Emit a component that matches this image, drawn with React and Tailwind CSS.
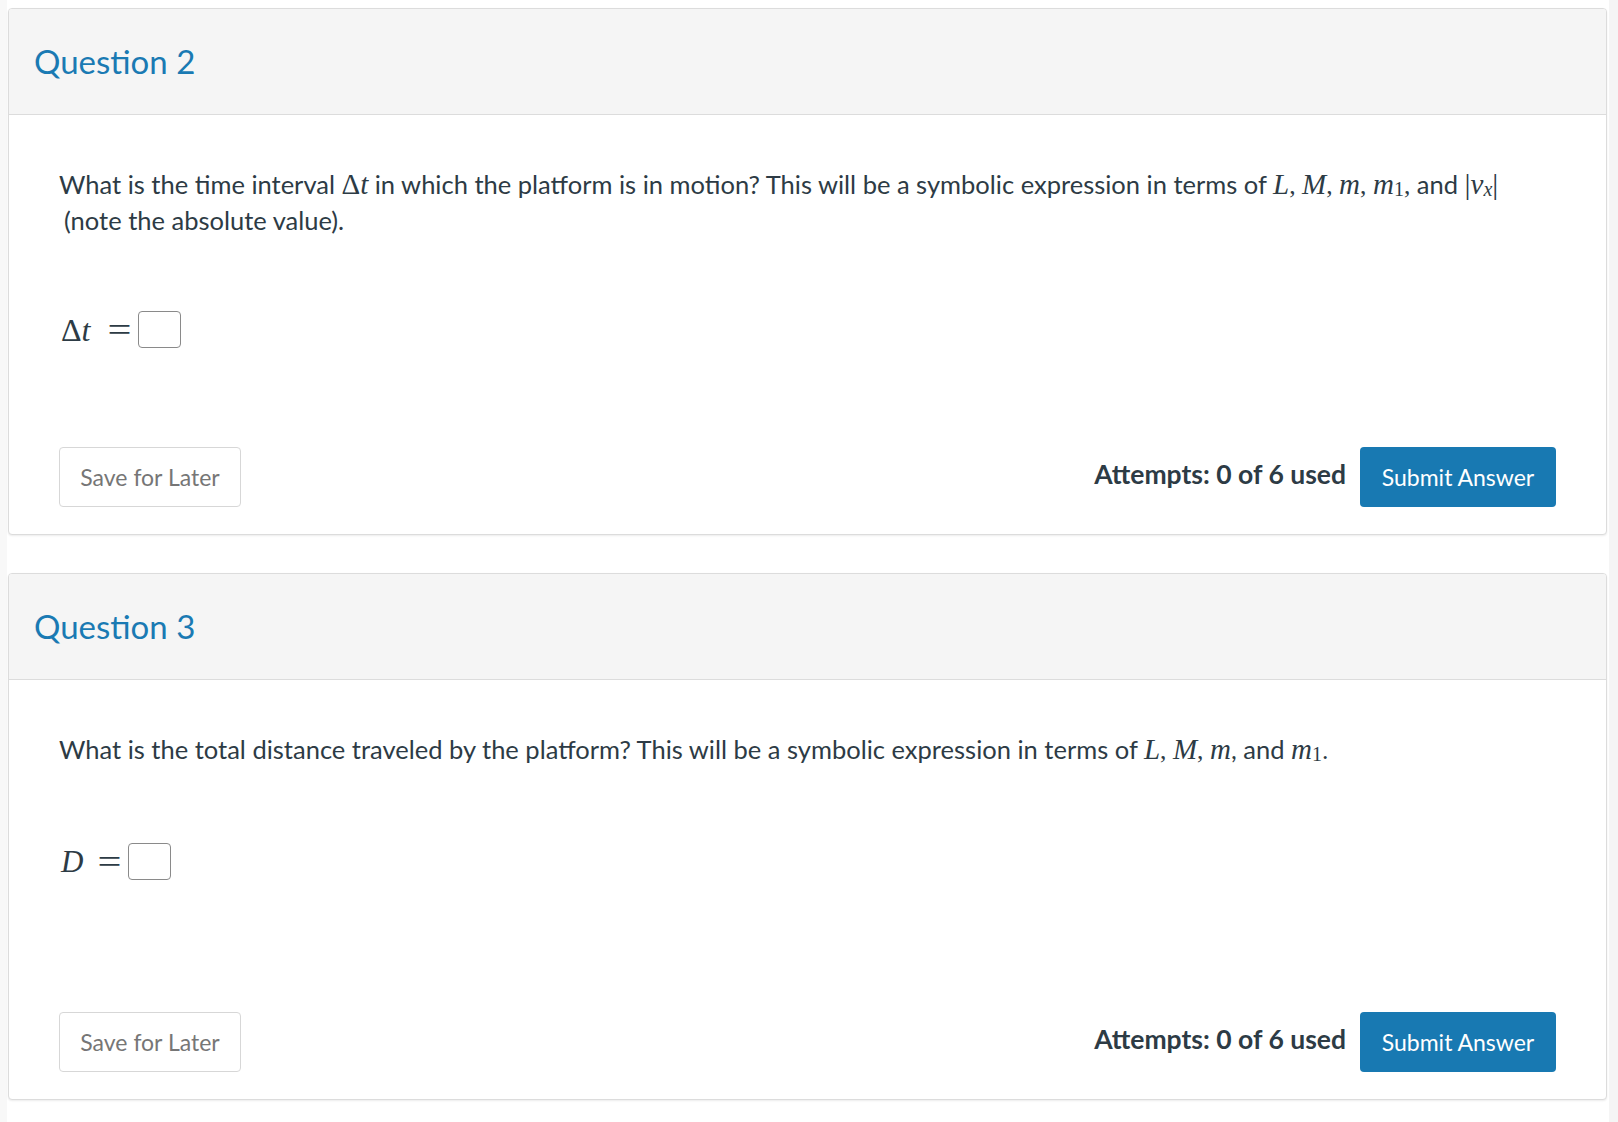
import React from 'react';

const Mi = ({ children }) => (
  <span className="font-['Liberation_Serif',serif] italic text-[29px] leading-none">{children}</span>
);

const Mo = ({ children }) => (
  <span className="font-['Liberation_Serif',serif]">{children}</span>
);

const Sub = ({ children, italic }) => (
  <sub className={`font-['Liberation_Serif',serif] text-[20px] relative top-[2px] ${italic ? 'italic' : ''}`}>{children}</sub>
);

const QuestionCard = ({ number, text, lhs, lhsGap, mt }) => (
  <div className="border border-[#dcdcdc] rounded-[4px] bg-white shadow-[0_1px_2px_rgba(0,0,0,0.08)] overflow-hidden">
    {/* Header */}
    <div className="h-[106px] bg-[#f5f5f5] border-b border-[#dcdcdc] flex items-center px-[25px]">
      <h2 className="text-[33px] text-[#1a7ab3] leading-none">Question {number}</h2>
    </div>

    {/* Body */}
    <div className="h-[419px] flex flex-col px-[50px] pt-[52px] pb-[27px]">
      <div className="text-[25.5px] leading-[35px] text-[#2d3b45]">{text}</div>

      <div className={`flex items-center h-[37px] ml-[2px] ${mt}`}>
        <span className="font-['Liberation_Serif',serif] text-[#2d3b45] leading-none">{lhs}</span>
        <span className={`font-['Liberation_Serif',serif] text-[34px] leading-none text-[#2d3b45] scale-x-125 ${lhsGap}`}>=</span>
        <div className="w-[43px] h-[37px] border border-[#8a8a8a] rounded-[4px] bg-white ml-[8px]"></div>
      </div>

      <div className="mt-auto flex items-center justify-between">
        <button className="w-[182px] h-[60px] border border-[#d7d7d7] rounded-[4px] bg-white text-[23px] text-[#767676]">
          Save for Later
        </button>
        <div className="flex items-center">
          <span className="text-[26.5px] font-bold text-[#2d3b45] mr-[14px] -mt-[4px]">Attempts: 0 of 6 used</span>
          <button className="w-[196px] h-[60px] rounded-[4px] bg-[#1879b2] text-white text-[23px]">
            Submit Answer
          </button>
        </div>
      </div>
    </div>
  </div>
);

export default function App() {
  const q2Text = (
    <>
      <div className="whitespace-nowrap">
        What is the time interval <span className="font-['Liberation_Serif',serif] text-[29px] leading-none">Δ</span><Mi>t</Mi> in which the platform is in motion? This will be a symbolic expression in terms of{' '}
        <Mi>L</Mi><Mo>,</Mo> <Mi>M</Mi><Mo>,</Mo> <Mi>m</Mi><Mo>,</Mo> <Mi>m</Mi><Sub>1</Sub><Mo>,</Mo> and{' '}
        <span className="font-['Liberation_Serif',serif] text-[30px] leading-none">|</span><Mi>v</Mi><Sub italic>x</Sub><span className="font-['Liberation_Serif',serif] text-[30px] leading-none">|</span>
      </div>
      <div className="ml-[5px]">(note the absolute value).</div>
    </>
  );

  const q3Text = (
    <div className="whitespace-nowrap">
      What is the total distance traveled by the platform? This will be a symbolic expression in terms of{' '}
      <Mi>L</Mi><Mo>,</Mo> <Mi>M</Mi><Mo>,</Mo> <Mi>m</Mi>, and <Mi>m</Mi><Sub>1</Sub><Mo>.</Mo>
    </div>
  );

  return (
    <div className="min-h-screen bg-white flex font-['Lato','Open_Sans',sans-serif]">
      <div className="w-[7px] bg-[#f8f8f8] shrink-0"></div>
      <div className="flex-1 pl-[1px] pr-[2px] pt-[8px] flex flex-col gap-[38px]">
        <QuestionCard
          number={2}
          text={q2Text}
          lhs={<span className="text-[32px]">Δ<span className="italic">t</span></span>}
          lhsGap="ml-[20px]"
          mt="mt-[73px]"
        />
        <QuestionCard
          number={3}
          text={q3Text}
          lhs={<span className="text-[31px] italic">D</span>}
          lhsGap="ml-[17px]"
          mt="mt-[75px]"
        />
      </div>
      <div className="w-[9px] bg-[#f5f5f5] shrink-0"></div>
    </div>
  );
}
